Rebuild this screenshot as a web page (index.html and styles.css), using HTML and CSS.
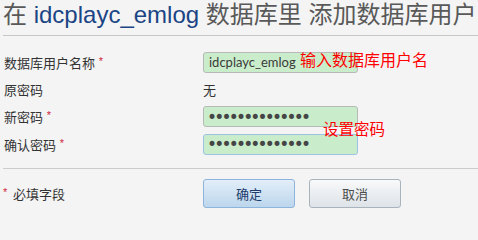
FILE: index.html
```html
<!DOCTYPE html>
<html lang="zh-CN">
<head>
<meta charset="utf-8">
<title>添加数据库用户</title>
<link rel="stylesheet" href="styles.css">
</head>
<body>
<div class="page">
  <h1 class="title">在 <span class="db-name">idcplayc_emlog</span> 数据库里 添加数据库用户</h1>
  <form class="form">
    <div class="row">
      <label class="label">数据库用户名称 <span class="req">*</span></label>
      <input class="field" type="text" value="idcplayc_emlog">
    </div>
    <div class="row">
      <span class="label">原密码</span>
      <span class="value">无</span>
    </div>
    <div class="row">
      <label class="label">新密码 <span class="req">*</span></label>
      <input class="field pass" type="password" value="12345678901234">
    </div>
    <div class="row">
      <label class="label">确认密码 <span class="req">*</span></label>
      <input class="field pass focus" type="password" value="12345678901234">
    </div>
  </form>
  <div class="footer">
    <span class="hint"><span class="req">*</span> 必填字段</span>
    <div class="actions">
      <button class="btn btn-primary" type="button">确定</button>
      <button class="btn btn-secondary" type="button">取消</button>
    </div>
  </div>
  <span class="note note-user">输入数据库用户名</span>
  <span class="note note-pass">设置密码</span>
</div>
</body>
</html>
```
FILE: styles.css
```css
html, body {
  margin: 0;
  padding: 0;
  background: #f4f4f4;
}
body {
  font-family: "Liberation Sans", "Noto Sans CJK SC", sans-serif;
  color: #333;
}
.page {
  position: relative;
  width: 475px;
  height: 213px;
  padding-left: 3px;
  overflow: hidden;
}
.title {
  margin: 0;
  padding: 1px 0 6px;
  font-size: 24px;
  line-height: 28px;
  font-weight: normal;
  color: #595959;
  white-space: nowrap;
  border-bottom: 1px solid #c6c6c6;
}
.db-name {
  color: #1b4584;
}
.form {
  padding: 12px 0 10px;
  border-bottom: 1px solid #cccccc;
}
.row {
  display: grid;
  grid-template-columns: 200px 1fr;
  align-items: center;
  height: 27px;
}
.row:first-child,
.row:last-child {
  height: 28px;
}
.label {
  padding-left: 1px;
  font-size: 13px;
  color: #333;
}
.req {
  color: #d01e3c;
  font-size: 11px;
  vertical-align: 3px;
}
.value {
  font-size: 13px;
  color: #333;
}
.field {
  box-sizing: border-box;
  width: 155px;
  height: 21px;
  margin: 0;
  padding: 0 5px;
  border: 1px solid #b7b9b7;
  border-radius: 3px;
  background: #c9edcb;
  font-family: Lato, "Open Sans", sans-serif;
  font-size: 13px;
  color: #3a3a3a;
  outline: none;
}
.pass {
  padding-left: 3px;
  font-family: "DejaVu Sans", sans-serif;
  font-size: 17px;
  letter-spacing: -2.8px;
  color: #454545;
}
.focus {
  border-color: #9cc3e3;
}
.footer {
  display: grid;
  grid-template-columns: 200px 1fr;
  align-items: center;
  padding-top: 10px;
}
.hint {
  font-size: 13px;
  color: #333;
}
.hint .req {
  margin-right: 2px;
}
.actions {
  display: flex;
  gap: 14px;
}
.btn {
  box-sizing: border-box;
  width: 92px;
  height: 29px;
  margin: 0;
  border-radius: 3px;
  font-family: "Noto Sans CJK SC", sans-serif;
  font-size: 13px;
  cursor: pointer;
}
.btn-primary {
  border: 1px solid #8db4dc;
  background: linear-gradient(#e3eef9, #bcd6ec);
  color: #1c3c6c;
}
.btn-secondary {
  border: 1px solid #a9b3bc;
  background: linear-gradient(#f8f9fa, #dde3e8);
  color: #4d4d4d;
}
.note {
  position: absolute;
  font-family: "Noto Sans CJK SC", sans-serif;
  color: #ff0000;
  white-space: nowrap;
}
.note-user {
  left: 300px;
  top: 51px;
  font-size: 16px;
  line-height: 16px;
}
.note-pass {
  left: 323px;
  top: 120px;
  font-size: 15.5px;
  line-height: 16px;
}
```
